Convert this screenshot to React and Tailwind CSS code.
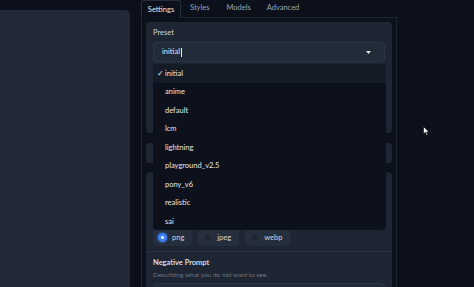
import React from "react";

const items = ["initial", "anime", "default", "lcm", "lightning", "playground_v2.5", "pony_v6", "realistic", "sai"];

function Radio({ label, checked }) {
  return (
    <div className="flex items-center h-[17px] px-[5px] gap-[5px] rounded-[4px] bg-[#252e3c]">
      {checked ? (
        <span className="w-[9px] h-[9px] rounded-full bg-[#3b82f6] flex items-center justify-center shadow-[0_0_3px_#3b82f6]">
          <span className="w-[3px] h-[3px] rounded-full bg-white" />
        </span>
      ) : (
        <span className="w-[9px] h-[9px] rounded-full bg-[#1e2632] border border-[#2b3441]" />
      )}
      <span className="text-[7.5px] text-[#d1d5db] pr-[3px]">{label}</span>
    </div>
  );
}

export default function App() {
  return (
    <div
      className="w-[474px] h-[287px] bg-[#0c101b] overflow-hidden flex relative"
      style={{ fontFamily: "Lato, 'Noto Sans', sans-serif" }}
    >
      <div className="w-[130px] mt-[10px] h-[300px] bg-[#212a36] rounded-tr-[5px] shrink-0" />
      <div className="ml-[11px] w-[256px] shrink-0 flex flex-col">
        <div className="h-[18px] flex items-end border-b border-[#1e2531] text-[7.5px]">
          <div className="w-[40px] h-[18px] border border-b-0 border-[#252d3a] rounded-t-[3px] flex items-center justify-center text-[#e5e7eb] bg-[#0c101b] -mb-px">
            Settings
          </div>
          <div className="h-[18px] flex items-center ml-[9px] text-[#9ca3af]">Styles</div>
          <div className="h-[18px] flex items-center ml-[17px] text-[#9ca3af]">Models</div>
          <div className="h-[18px] flex items-center ml-[16px] text-[#9ca3af]">Advanced</div>
        </div>
        <div className="flex-1 border-x border-[#1e2531] px-[4px] pt-[4px] flex flex-col">
          <div className="h-[111px] bg-[#1e2633] rounded-[4px] px-[7px] pt-[6px] relative z-10">
            <div className="text-[7.5px] text-[#d1d5db] h-[10px] leading-[10px]">Preset</div>
            <div className="relative mt-[4px]">
              <div className="h-[20px] rounded-[4px] bg-[#222b38] border border-[#2c3542] flex items-center pl-[8px] pr-[13px] justify-between">
                <span className="text-[7.5px] text-[#e5e7eb] flex items-center">
                  initial<span className="w-px h-[9px] bg-[#e5e7eb] ml-px" />
                </span>
                <svg width="5" height="3" viewBox="0 0 5 3">
                  <path d="M0 0 L5 0 L2.5 3 Z" fill="#e5e7eb" />
                </svg>
              </div>
              <div className="absolute left-0 top-[22px] w-[233px] h-[166px] bg-[#0d111c] rounded-b-[4px] flex flex-col">
                {items.map((it, i) => (
                  <div
                    key={it}
                    className={`h-[18.5px] shrink-0 flex items-center pl-[12px] relative text-[7.5px] text-[#e5e7eb] ${i === 0 ? "bg-[#151b27]" : ""}`}
                  >
                    {i === 0 && <span className="absolute left-[4px]">✓</span>}
                    {it}
                  </div>
                ))}
              </div>
            </div>
          </div>
          <div className="h-[20px] mt-[10px] bg-[#1e2633] rounded-[4px]" />
          <div className="h-[80px] mt-[9px] bg-[#1e2633] rounded-t-[4px] flex items-end px-[7px] pb-[5px] gap-[6px] border-b border-[#2a3240]">
            <Radio label="png" checked />
            <Radio label="jpeg" />
            <Radio label="webp" />
          </div>
          <div className="flex-1 bg-[#1e2633] px-[7px] pt-[6px]">
            <div className="text-[7.5px] font-semibold text-[#e5e7eb] h-[10px] leading-[10px]">Negative Prompt</div>
            <div className="text-[6.5px] text-[#6b7280] mt-[2px] h-[9px] leading-[9px]">Describing what you do not want to see.</div>
            <div className="mt-[4px] h-[20px] rounded-[4px] bg-[#222b38] border border-[#2c3542]" />
          </div>
        </div>
      </div>
      <svg className="absolute left-[423px] top-[126px]" width="7" height="10" viewBox="0 0 7 10">
        <path d="M0.5 0.5 L0.5 8 L2.3 6.3 L3.6 9.3 L4.8 8.8 L3.6 5.9 L6 5.9 Z" fill="#ffffff" stroke="#000" strokeWidth="0.6" />
      </svg>
    </div>
  );
}
